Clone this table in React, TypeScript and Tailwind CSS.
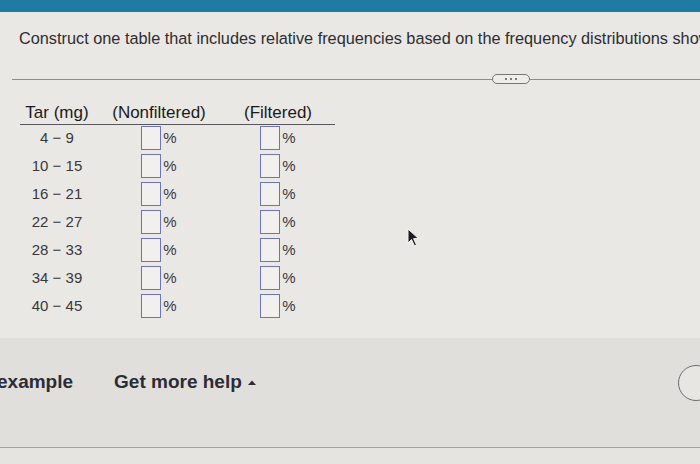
import { ReactElement } from "react";

const rows = ["4 − 9", "10 − 15", "16 − 21", "22 − 27", "28 − 33", "34 − 39", "40 − 45"];

function PercentInput(): ReactElement {
  return (
    <div className="flex items-start">
      <div className="w-[20px] h-[24px] border-[1.5px] border-[#7074b4] bg-[#f1f0ee]" />
      <span className="ml-[2px] leading-[24px]">%</span>
    </div>
  );
}

function Cursor(): ReactElement {
  return (
    <svg className="absolute left-[407px] top-[228px]" width="14" height="20" viewBox="0 0 14 20">
      <path d="M1 1 L1 15 L4.5 11.5 L7.5 18 L9.5 17 L6.6 10.6 L11.5 10.6 Z" fill="#1c1c1f" stroke="#f4f4f4" strokeWidth="1" />
    </svg>
  );
}

export default function App(): ReactElement {
  return (
    <div className="relative w-[700px] h-[464px] overflow-hidden bg-[#e6e4e1] text-[#2b2b2e] font-['Liberation_Sans',Arial,sans-serif]">
      <div className="h-[12px] bg-[#1f7aa4]" />

      {/* question */}
      <div className="bg-[#eae8e5] h-[326px]">
        <p className="pt-[16px] pl-[19px] whitespace-nowrap text-[16.3px] leading-[20px] text-[#2d2d30]">
          Construct one table that includes relative frequencies based on the frequency distributions shown below.
        </p>

        <div className="mt-[26px] ml-[12px] flex items-center">
          <div className="h-px w-[480px] bg-[#8d8d90]" />
          <button className="flex h-[10px] w-[38px] items-center justify-center gap-[3px] rounded-full border border-[#77777b] bg-[#eeede9]">
            <span className="h-[2px] w-[2px] rounded-full bg-[#55555a]" />
            <span className="h-[2px] w-[2px] rounded-full bg-[#55555a]" />
            <span className="h-[2px] w-[2px] rounded-full bg-[#55555a]" />
          </button>
          <div className="h-px flex-1 bg-[#8d8d90]" />
        </div>

        {/* table */}
        <div className="ml-[20px] mt-[20px] w-[315px] text-[15px]">
          <div className="flex h-[21px] items-start border-b border-[#55555a] text-[17px] text-[#1a1a1d]">
            <div className="w-[74px] text-center leading-[18px] whitespace-nowrap">Tar (mg)</div>
            <div className="w-[130px] text-center leading-[18px]">(Nonfiltered)</div>
            <div className="w-[108px] text-center leading-[18px]">(Filtered)</div>
          </div>
          {rows.map((r) => (
            <div key={r} className="flex h-[28px] items-start pt-[1px] text-[#38383c]">
              <div className="w-[74px] text-center leading-[24px]">{r}</div>
              <div className="flex w-[130px] justify-center">
                <PercentInput />
              </div>
              <div className="flex w-[108px] justify-center">
                <PercentInput />
              </div>
            </div>
          ))}
        </div>
      </div>

      {/* footer */}
      <div className="relative h-[110px] border-b border-[#a3a2a2] bg-[#e1dfdc]">
        <div className="flex items-center pt-[30px] text-[19px] font-bold text-[#2c2c34]">
          <span className="-ml-[3px]">example</span>
          <span className="ml-[41px]">Get more help</span>
          <svg className="ml-[6px] mt-[2px]" width="8" height="6" viewBox="0 0 8 6">
            <path d="M0 5 L4 0.5 L8 5 Z" fill="#2c2c34" />
          </svg>
        </div>
        <div className="absolute left-[678px] top-[27px] h-[36px] w-[36px] rounded-full border-[1.5px] border-[#6a6a70] bg-[#e8e6e3]" />
      </div>

      <Cursor />
    </div>
  );
}
